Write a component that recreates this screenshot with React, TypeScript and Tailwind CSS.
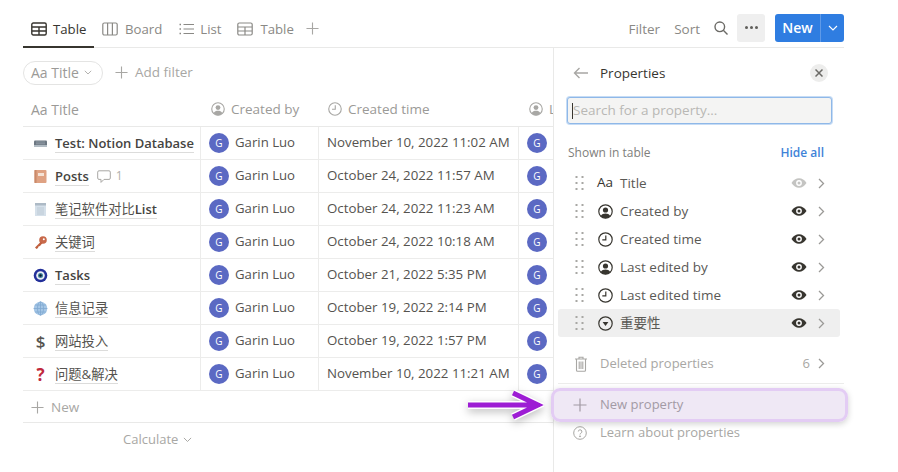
import React from "react";

const FONT = '"Open Sans","Noto Sans CJK SC",sans-serif';

function TableIcon({ c = "#37352f", sw = 1.4 }: { c?: string; sw?: number }) {
  return (
    <svg width="16" height="14" viewBox="0 0 16 14" fill="none" stroke={c} strokeWidth={sw}>
      <rect x="0.8" y="1" width="14.4" height="12" rx="1.5" />
      <path d="M1 5h14M1 9h14M8 5v8" />
    </svg>
  );
}
function BoardIcon() {
  return (
    <svg width="16" height="14" viewBox="0 0 16 14" fill="none" stroke="#8a8985" strokeWidth="1.2">
      <rect x="0.8" y="1" width="14.4" height="12" rx="1.5" />
      <path d="M5.6 1v12M10.4 1v12" />
    </svg>
  );
}
function ListIcon() {
  return (
    <svg width="15" height="12" viewBox="0 0 15 12" fill="none" stroke="#8a8985" strokeWidth="1.2">
      <path d="M4.5 1.5H15M4.5 6H15M4.5 10.5H15" />
      <path d="M0.5 1.5h1.5M0.5 6h1.5M0.5 10.5h1.5" strokeWidth="1.6" />
    </svg>
  );
}
function Plus({ s = 14, c = "#a8a7a4" }: { s?: number; c?: string }) {
  return (
    <svg width={s} height={s} viewBox="0 0 14 14" fill="none" stroke={c} strokeWidth="1.2">
      <path d="M7 0.5v13M0.5 7h13" />
    </svg>
  );
}
function Chevron({ c = "#a8a7a4", s = 10 }: { c?: string; s?: number }) {
  return (
    <svg width={s} height={s * 0.6} viewBox="0 0 10 6" fill="none" stroke={c} strokeWidth="1.1">
      <path d="M1 1l4 4 4-4" />
    </svg>
  );
}
function ChevRight() {
  return (
    <svg width="7" height="11" viewBox="0 0 7 11" fill="none" stroke="#9b9a97" strokeWidth="1.3">
      <path d="M1 1l4.5 4.5L1 10" />
    </svg>
  );
}
function PersonIcon({ c = "#37352f", s = 15 }: { c?: string; s?: number }) {
  return (
    <svg width={s} height={s} viewBox="0 0 15 15">
      <circle cx="7.5" cy="7.5" r="6.7" fill="none" stroke={c} strokeWidth="1.2" />
      <circle cx="7.5" cy="6" r="2.6" fill={c} />
      <path d="M2.8 12c1-2 2.8-2.6 4.7-2.6s3.700.6 4.700 2.600c-1.200 1.300-2.900 2.200-4.700 2.200s-3.500-.9-4.700-2.200z" fill={c} />
    </svg>
  );
}
function ClockIcon({ c = "#37352f", s = 15 }: { c?: string; s?: number }) {
  return (
    <svg width={s} height={s} viewBox="0 0 15 15" fill="none" stroke={c} strokeWidth="1.2">
      <circle cx="7.5" cy="7.5" r="6.7" />
      <path d="M7.800 3.500v4.300H4.300" />
    </svg>
  );
}
function SelectIcon() {
  return (
    <svg width="15" height="15" viewBox="0 0 15 15" fill="none" stroke="#37352f" strokeWidth="1.2">
      <circle cx="7.5" cy="7.5" r="6.7" />
      <path d="M4.600 6h5.800l-2.900 4z" fill="#37352f" stroke="none" />
    </svg>
  );
}
function Eye({ c = "#37352f" }: { c?: string }) {
  return (
    <svg width="16" height="10" viewBox="0 0 16 10">
      <path d="M0.500 5C2.500 1.800 5 0.300 8 0.300S13.500 1.800 15.500 5C13.500 8.200 11 9.700 8 9.700S2.500 8.200 0.500 5z" fill={c} />
      <circle cx="8" cy="5" r="2.900" fill="#fff" />
      <circle cx="8" cy="5" r="1.500" fill={c} />
    </svg>
  );
}
function Grip() {
  return (
    <svg width="9" height="14" viewBox="0 0 9 14" fill="#a8a7a4">
      {[1, 7, 13].map((y) => (
        <React.Fragment key={y}>
          <rect x="0.500" y={y - 1} width="2" height="2" />
          <rect x="6.500" y={y - 1} width="2" height="2" />
        </React.Fragment>
      ))}
    </svg>
  );
}

function Keyboard() {
  return (
    <svg width="15" height="15" viewBox="0 0 15 15">
      <rect x="1" y="4.500" width="13" height="6" rx="1" fill="#6c7782" />
      <rect x="1" y="9" width="13" height="2" fill="#b2bcc4" />
      <path d="M3 6h9M3 7.800h9" stroke="#98a3ad" strokeWidth="0.8" />
    </svg>
  );
}
function Book() {
  return (
    <svg width="15" height="15" viewBox="0 0 15 15">
      <rect x="1.500" y="1" width="12" height="13" rx="1" fill="#dfa283" />
      <rect x="1.500" y="1" width="2" height="13" fill="#c98a6a" />
      <rect x="5" y="4" width="6" height="3" fill="#f5e3d6" />
    </svg>
  );
}
function Memo() {
  return (
    <svg width="15" height="15" viewBox="0 0 15 15">
      <rect x="2" y="1" width="11" height="13" fill="#d5e0ea" />
      <rect x="2" y="1" width="11" height="2.500" fill="#adbac6" />
      <path d="M4 6h7M4 8h7M4 10h7M4 12h7" stroke="#b8c5d1" strokeWidth="0.8" />
    </svg>
  );
}
function KeyE() {
  return (
    <svg width="15" height="15" viewBox="0 0 15 15">
      <circle cx="10" cy="5" r="3.800" fill="#c8694a" />
      <circle cx="10.800" cy="4.200" r="1" fill="#fff" />
      <path d="M7.500 7L2 12.500l1.500 1.500 1.500-1 .5-1.500 1.500-.5 2.500-3z" fill="#c0603f" />
    </svg>
  );
}
function Nazar() {
  return (
    <svg width="15" height="15" viewBox="0 0 15 15">
      <circle cx="7.500" cy="7.500" r="6.800" fill="#23309a" />
      <circle cx="7.500" cy="7.500" r="4.300" fill="#e9eef4" />
      <circle cx="7.500" cy="7.500" r="2.500" fill="#3b7f9b" />
      <circle cx="7.500" cy="7.500" r="1.200" fill="#10182f" />
    </svg>
  );
}
function Globe() {
  return (
    <svg width="15" height="15" viewBox="0 0 15 15">
      <circle cx="7.500" cy="7.500" r="6.800" fill="#a5c6e6" />
      <g fill="none" stroke="#7fa8d0" strokeWidth="0.8">
        <ellipse cx="7.500" cy="7.500" rx="3" ry="6.800" />
        <path d="M7.500 .7v13.600M.7 7.500h13.600M1.800 4h11.400M1.800 11h11.400" />
      </g>
    </svg>
  );
}

function Cell({ children, w, border = true }: { children: React.ReactNode; w: string; border?: boolean }) {
  return (
    <div className={`flex items-center shrink-0 ${w} ${border ? "border-r border-[#ececeb]" : ""}`}>{children}</div>
  );
}

const rows: { key: string; icon: React.ReactNode; title: React.ReactNode; extra?: boolean; date: string; bold?: boolean }[] = [
  { key: "a", icon: <Keyboard />, title: "Test: Notion Database", date: "November 10, 2022 11:02 AM", bold: true },
  { key: "b", icon: <Book />, title: "Posts", extra: true, date: "October 24, 2022 11:57 AM", bold: true },
  {
    key: "c",
    icon: <Memo />,
    title: (
      <>
        笔记软件对比<span className="font-semibold text-[13px] text-[#45443f]">List</span>
      </>
    ),
    date: "October 24, 2022 11:23 AM",
  },
  { key: "d", icon: <KeyE />, title: "关键词", date: "October 24, 2022 10:18 AM" },
  { key: "e", icon: <Nazar />, title: "Tasks", date: "October 21, 2022 5:35 PM", bold: true },
  { key: "f", icon: <Globe />, title: "信息记录", date: "October 19, 2022 2:14 PM" },
  {
    key: "g",
    icon: <span className="text-[17px] font-semibold leading-none text-[#55534f]">$</span>,
    title: "网站投入",
    date: "October 19, 2022 1:57 PM",
  },
  {
    key: "h",
    icon: <span className="text-[17px] font-bold leading-none text-[#c0283c]">?</span>,
    title: "问题&解决",
    date: "November 10, 2022 11:21 AM",
  },
];

function Avatar() {
  return (
    <div className="w-5 h-5 rounded-full bg-[#5b69c3] flex items-center justify-center text-white text-[10px] font-medium shrink-0">
      G
    </div>
  );
}

function PropRow({ icon, label, eye = "#37352f", hover }: { icon: React.ReactNode; label: string; eye?: string; hover?: boolean }) {
  return (
    <div className={`flex items-center h-7 pl-[17px] pr-[15px] rounded-[3px] ${hover ? "bg-[#efefef]" : ""}`}>
      <Grip />
      <div className="w-[20px] ml-[11px] flex justify-center shrink-0">{icon}</div>
      <span className="ml-[5px] text-[13.500px] text-[#5a5955] flex-1">{label}</span>
      <Eye c={eye} />
      <div className="ml-[11px] flex"><ChevRight /></div>
    </div>
  );
}

export default function App() {
  return (
    <div className="relative w-[898px] h-[472px] overflow-hidden bg-white pl-[23px] pr-[54px] flex flex-col" style={{ fontFamily: FONT }}>
      {/* Toolbar */}
      <div className="h-[48px] shrink-0 border-b border-[#e9e9e8] flex items-end text-[13.200px] text-[#8a8985]">
        <div className="h-[41px] flex items-center gap-[6px] w-[71px] pl-[8px] border-b-2 border-[#37352f] text-[#37352f] font-medium mb-[-1px] pt-[4px]">
          <TableIcon /> <span className="pt-[2px]">Table</span>
        </div>
        <div className="h-[40px] flex items-center gap-[7px] ml-[8px] pt-[4px]"><BoardIcon /><span className="pt-[2px]">Board</span></div>
        <div className="h-[40px] flex items-center gap-[6px] ml-[17px] pt-[4px]"><ListIcon /><span className="pt-[2px]">List</span></div>
        <div className="h-[40px] flex items-center gap-[7px] ml-[16px] pt-[4px]"><TableIcon c="#8a8985" sw={1.2} /><span className="pt-[2px]">Table</span></div>
        <div className="h-[40px] ml-[12px] pt-[2px] flex items-center"><Plus s={13} /></div>
        <div className="h-[39px] ml-auto flex items-center">
          <span className="text-[13.500px] pt-[4px]">Filter</span>
          <span className="ml-[14px] text-[13.500px] pt-[4px]">Sort</span>
          <svg className="ml-[14px]" width="14" height="14" viewBox="0 0 14 14" fill="none" stroke="#6b6a66" strokeWidth="1.400">
            <circle cx="5.800" cy="5.800" r="4.800" />
            <path d="M9.300 9.300l4.200 4.200" />
          </svg>
          <div className="ml-[9px] w-[28px] h-[28px] bg-[#efefef] rounded-[3px] flex items-center justify-center gap-[2px]">
            <span className="w-[3px] h-[3px] rounded-full bg-[#5f5e5a]" />
            <span className="w-[3px] h-[3px] rounded-full bg-[#5f5e5a]" />
            <span className="w-[3px] h-[3px] rounded-full bg-[#5f5e5a]" />
          </div>
          <div className="ml-[10px] w-[69px] h-[28px] bg-[#2f7de1] rounded-[3px] flex items-center text-white font-semibold text-[14px]">
            <span className="w-[46px] text-center border-r border-[#5f9ae8] leading-[28px]">New</span>
            <div className="flex-1 flex justify-center"><Chevron c="#fff" /></div>
          </div>
        </div>
      </div>

      <div className="flex flex-1 min-h-0">
        {/* Left */}
        <div className="w-[530px] shrink-0 overflow-hidden flex flex-col">
          <div className="h-[45px] shrink-0 flex items-center pt-[4px] text-[13.500px] text-[#a8a7a4]">
            <div className="h-[24px] w-[80px] border border-[#e4e4e3] rounded-full flex items-center pl-[7px] gap-[5px]">
              <span className="text-[#9b9a97] text-[14px]">Aa Title</span>
              <Chevron s={8} />
            </div>
            <div className="ml-[12px] flex items-center gap-[7px]"><Plus s={13} /><span>Add filter</span></div>
          </div>
          {/* Header */}
          <div className="w-[640px] h-[34px] pb-[1px] shrink-0 flex border-b border-[#e9e9e8] text-[13.500px] text-[#9b9a97]">
            <Cell w="w-[178px]" border={false}><span className="pl-[8px] text-[14px]">Aa Title</span></Cell>
            <Cell w="w-[118px]" border={false}>
              <div className="ml-[10px] flex items-center gap-[6px]"><PersonIcon c="#a8a7a4" s={14} /><span>Created by</span></div>
            </Cell>
            <Cell w="w-[200px]" border={false}>
              <div className="ml-[9px] flex items-center gap-[6px]"><ClockIcon c="#a8a7a4" s={14} /><span>Created time</span></div>
            </Cell>
            <Cell w="w-[120px]" border={false}>
              <div className="ml-[10px] flex items-center gap-[6px]"><PersonIcon c="#a8a7a4" s={14} /><span>L</span></div>
            </Cell>
          </div>
          {/* Rows */}
          {rows.map((r) => (
            <div key={r.key} className="w-[640px] h-[33px] shrink-0 flex border-b border-[#ececeb] text-[13.300px] text-[#55534f]">
              <Cell w="w-[178px]">
                <div className="w-[15px] ml-[10px] flex justify-center shrink-0">{r.icon}</div>
                <span className={`ml-[7px] border-b border-[#dcdcdb] leading-[18px] whitespace-nowrap ${r.bold ? "font-semibold text-[#45443f] text-[13px]" : ""}`}>{r.title}</span>
                {r.extra && (
                  <div className="ml-[8px] flex items-center gap-[5px] text-[#b0afac] text-[12px]">
                    <svg width="14" height="13" viewBox="0 0 14 13" fill="none" stroke="#a8a7a4" strokeWidth="1">
                      <path d="M2 .8h10a1.300 1.300 0 0 1 1.300 1.300v6a1.300 1.300 0 0 1-1.300 1.300H7l-3 3V9.400H2A1.300 1.300 0 0 1 .7 8.100v-6A1.300 1.300 0 0 1 2 .8z" />
                    </svg>
                    <span>1</span>
                  </div>
                )}
              </Cell>
              <Cell w="w-[118px]">
                <div className="ml-[8px] flex items-center gap-[6px]"><Avatar /><span className="text-[13.200px]">Garin Luo</span></div>
              </Cell>
              <Cell w="w-[200px]">
                <span className="ml-[8px] whitespace-nowrap">{r.date}</span>
              </Cell>
              <Cell w="w-[120px]" border={false}>
                <div className="ml-[8px]"><Avatar /></div>
              </Cell>
            </div>
          ))}
          <div className="h-[32px] shrink-0 border-b border-[#e9e9e8] flex items-center pl-[8px] pt-[1px] gap-[7px] text-[13.500px] text-[#a8a7a4]">
            <Plus s={13} /><span>New</span>
          </div>
          <div className="h-[34px] shrink-0 flex items-center text-[13px] text-[#a8a7a4] pl-[100px] gap-[5px]">
            <span>Calculate</span><Chevron s={9} />
          </div>
        </div>

        {/* Panel */}
        <div className="w-[291px] shrink-0 border-l border-[#e9e9e8] flex flex-col">
          <div className="h-[49px] shrink-0 flex items-center pl-[19px] pr-[16px]">
            <svg width="15" height="12" viewBox="0 0 15 12" fill="none" stroke="#a8a7a4" strokeWidth="1.400">
              <path d="M15 6H1.500M6.500 1L1.500 6l5 5" />
            </svg>
            <span className="ml-[12px] pt-[2px] text-[13.500px] text-[#37352f] font-medium flex-1">Properties</span>
            <div className="w-[18px] h-[18px] rounded-full bg-[#ededec] flex items-center justify-center">
              <svg width="8" height="8" viewBox="0 0 8 8" stroke="#6b6a66" strokeWidth="1.500"><path d="M.5.5l7 7M7.500.5l-7 7" /></svg>
            </div>
          </div>
          <div className="mx-[13px] w-[265px] h-[27px] shrink-0 rounded-[3px] bg-[#f4f4f3] border border-[#8fb8e8] shadow-[0_0_0_1px_#c6dcf5] flex items-center pl-[4px] text-[13.500px] text-[#b9b8b5]">
            <span className="w-px h-[16px] bg-[#37352f]" />
            <span>Search for a property...</span>
          </div>
          <div className="h-[34px] mt-[8px] shrink-0 flex items-end pb-[4px] pl-[14px] pr-[20px] justify-between text-[12px]">
            <span className="text-[#80807c]">Shown in table</span>
            <span className="text-[#4083d8] font-semibold">Hide all</span>
          </div>
          <div className="mx-[4px] w-[282px] mt-[3px] flex flex-col">
            <PropRow icon={<span className="text-[13.500px] text-[#37352f] leading-none">Aa</span>} label="Title" eye="#c4c4c2" />
            <PropRow icon={<PersonIcon />} label="Created by" />
            <PropRow icon={<ClockIcon />} label="Created time" />
            <PropRow icon={<PersonIcon />} label="Last edited by" />
            <PropRow icon={<ClockIcon />} label="Last edited time" />
            <PropRow icon={<SelectIcon />} label="重要性" hover />
          </div>
          <div className="h-[47px] shrink-0 mx-[4px] flex items-center border-b border-[#ececeb] pl-[16px] pr-[19px] pt-[7px] text-[13px] text-[#a8a7a4] w-[286px]">
            <svg width="14" height="16" viewBox="0 0 14 16" fill="none" stroke="#a8a7a4" strokeWidth="1.100">
              <path d="M1 3h12M5 3V1.200h4V3M2.500 3v11.300a1 1 0 0 0 1 1h7a1 1 0 0 0 1-1V3M5.200 5.500v7.500M7 5.500v7.500M8.800 5.500v7.500" />
            </svg>
            <span className="ml-[12px] flex-1">Deleted properties</span>
            <span className="mr-[8px]">6</span>
            <ChevRight />
          </div>
          <div className="h-[42px] shrink-0 flex items-center pl-[19px] text-[13px] text-[#a8a7a4]">
            <Plus s={14} />
            <span className="ml-[13px]">New property</span>
          </div>
          <div className="h-[13px] shrink-0 flex items-center pl-[19px] text-[13px] text-[#a8a7a4]">
            <svg width="14" height="14" viewBox="0 0 14 14" fill="none" stroke="#a8a7a4" strokeWidth="1">
              <circle cx="7" cy="7" r="6.300" />
              <path d="M5.300 5.500a1.800 1.800 0 1 1 2.600 1.700c-.6.300-.9.700-.9 1.300" />
              <circle cx="7" cy="10.300" r=".5" fill="#a8a7a4" />
            </svg>
            <span className="ml-[13px]">Learn about properties</span>
          </div>
        </div>
      </div>

      {/* Annotation overlays */}
      <div className="absolute left-[551px] top-[388px] w-[297px] h-[34px] rounded-[9px] border-[3px] border-[#e3ccf4] bg-[#7a3fb0]/12 shadow-[0_2px_6px_rgba(0,0,0,0.18)]" />
      <svg className="absolute left-[466px] top-[388px] drop-shadow-[0_3px_4px_rgba(0,0,0,0.25)]" width="78" height="36" viewBox="0 0 78 36" fill="none">
        <path d="M2 17H70M47 5l25 12L47 29" stroke="#fff" strokeWidth="8" />
        <path d="M2 17H70M47 5l25 12L47 29" stroke="#9d1dd4" strokeWidth="5" />
      </svg>
    </div>
  );
}
